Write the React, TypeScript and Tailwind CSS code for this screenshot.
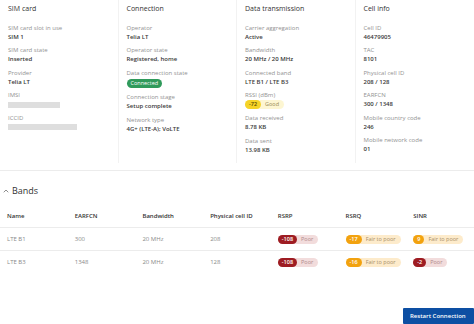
import { ChevronUp } from "lucide-react";

type Item = { label: string; value?: string; node?: React.ReactNode };

function Pill({ num, text, dark, light, numText = "text-white", textColor }: { num: string; text: string; dark: string; light: string; numText?: string; textColor: string }) {
  return (
    <span className={`inline-flex h-[9px] items-center rounded-full ${light}`}>
      <span className={`flex h-[9px] items-center rounded-full px-[4px] text-[5.5px] font-semibold ${dark} ${numText}`}>{num}</span>
      <span className={`pl-[4px] pr-[5px] text-[5.5px] ${textColor}`}>{text}</span>
    </span>
  );
}

function Card({ title, items }: { title: string; items: Item[] }) {
  return (
    <div className="flex flex-col border-r border-[#f2f2f2] px-2 pt-[4px] last:border-r-0">
      <div className="text-[7px] leading-[10px] font-medium text-[#333]">{title}</div>
      <div className="mt-[9.5px] flex flex-col gap-[4.5px]">
        {items.map((it) => (
          <div key={it.label} className="flex flex-col">
            <div className="text-[6px] leading-[9px] text-[#929292]">{it.label}</div>
            {it.node ?? <div className="text-[6px] leading-[9px] font-semibold text-[#3a3a3a]">{it.value}</div>}
          </div>
        ))}
      </div>
    </div>
  );
}

const bands = [
  { name: "LTE B1", earfcn: "300", bw: "20 MHz", pci: "208", rsrp: "-108", rsrq: "-17", rsrqL: "Fair to poor", sinr: "9", sinrL: "Fair to poor", sinrBad: false },
  { name: "LTE B3", earfcn: "1348", bw: "20 MHz", pci: "128", rsrp: "-108", rsrq: "-16", rsrqL: "Fair to poor", sinr: "-2", sinrL: "Poor", sinrBad: true },
];

export default function App() {
  return (
    <div className="h-[324px] w-[474px] overflow-hidden bg-white" style={{ fontFamily: '"Open Sans", sans-serif' }}>
      {/* Status cards */}
      <div className="grid h-[163px] grid-cols-4">
        <Card
          title="SIM card"
          items={[
            { label: "SIM card slot in use", value: "SIM 1" },
            { label: "SIM card state", value: "Inserted" },
            { label: "Provider", value: "Telia LT" },
            { label: "IMSI", node: <div className="my-[1.5px] h-[6px] w-[52px] bg-[#dedede] blur-[0.5px]" /> },
            { label: "ICCID", node: <div className="my-[1.5px] h-[6px] w-[69px] bg-[#dedede] blur-[0.5px]" /> },
          ]}
        />
        <Card
          title="Connection"
          items={[
            { label: "Operator", value: "Telia LT" },
            { label: "Operator state", value: "Registered, home" },
            {
              label: "Data connection state",
              node: (
                <div className="mt-[1px] mb-[1px] flex">
                  <span className="flex h-[9px] items-center rounded-full bg-[#2f9a5b] px-[4px] text-[5.5px] text-white">Connected</span>
                </div>
              ),
            },
            { label: "Connection stage", value: "Setup complete" },
            { label: "Network type", value: "4G+ (LTE-A); VoLTE" },
          ]}
        />
        <Card
          title="Data transmission"
          items={[
            { label: "Carrier aggregation", value: "Active" },
            { label: "Bandwidth", value: "20 MHz / 20 MHz" },
            { label: "Connected band", value: "LTE B1 / LTE B3" },
            {
              label: "RSSI (dBm)",
              node: (
                <div className="mb-[0.5px] flex">
                  <Pill num="-72" text="Good" dark="bg-[#f5d327]" light="bg-[#fdf6d2]" numText="text-[#5a4a00]" textColor="text-[#9a8a55]" />
                </div>
              ),
            },
            { label: "Data received", value: "8.78 KB" },
            { label: "Data sent", value: "13.98 KB" },
          ]}
        />
        <Card
          title="Cell info"
          items={[
            { label: "Cell ID", value: "46479905" },
            { label: "TAC", value: "8101" },
            { label: "Physical cell ID", value: "208 / 128" },
            { label: "EARFCN", value: "300 / 1348" },
            { label: "Mobile country code", value: "246" },
            { label: "Mobile network code", value: "01" },
          ]}
        />
      </div>
      <div className="mt-[7px] border-t border-[#ececec]" />

      {/* Bands */}
      <div className="mt-[14px] flex items-center gap-[2px] pl-[2px]">
        <ChevronUp className="size-[8px] text-[#555]" strokeWidth={2} />
        <span className="text-[9px] leading-[12px] font-medium text-[#333]">Bands</span>
      </div>

      <div className="mt-[9px]">
        <div className="grid h-[22px] grid-cols-7 items-center border-b border-[#ececec] text-[6px] font-semibold text-[#333]">
          {["Name", "EARFCN", "Bandwidth", "Physical cell ID", "RSRP", "RSRQ", "SINR"].map((h) => (
            <div key={h} className="pl-[7px]">{h}</div>
          ))}
        </div>
        {bands.map((b) => (
          <div key={b.name} className="grid h-[23px] grid-cols-7 items-center border-b border-[#ececec] text-[6px] text-[#8a8a8a] last:border-b-0">
            <div className="pl-[7px]">{b.name}</div>
            <div className="pl-[7px]">{b.earfcn}</div>
            <div className="pl-[7px]">{b.bw}</div>
            <div className="pl-[7px]">{b.pci}</div>
            <div className="flex pl-[7px]">
              <Pill num={b.rsrp} text="Poor" dark="bg-[#9e1c22]" light="bg-[#f2dcdc]" textColor="text-[#b08a8a]" />
            </div>
            <div className="flex pl-[7px]">
              <Pill num={b.rsrq} text={b.rsrqL} dark="bg-[#f2a20f]" light="bg-[#fdebcb]" textColor="text-[#a88f6a]" />
            </div>
            <div className="flex pl-[7px]">
              {b.sinrBad ? (
                <Pill num={b.sinr} text={b.sinrL} dark="bg-[#9e1c22]" light="bg-[#f2dcdc]" textColor="text-[#b08a8a]" />
              ) : (
                <Pill num={b.sinr} text={b.sinrL} dark="bg-[#f2a20f]" light="bg-[#fdebcb]" textColor="text-[#a88f6a]" />
              )}
            </div>
          </div>
        ))}
      </div>

      <div className="mt-[34px] flex justify-end">
        <button className="h-[16px] w-[71px] rounded-[1px] bg-[#0d4fa3] pl-[7px] text-left text-[6px] font-semibold text-white">
          Restart Connection
        </button>
      </div>
    </div>
  );
}
